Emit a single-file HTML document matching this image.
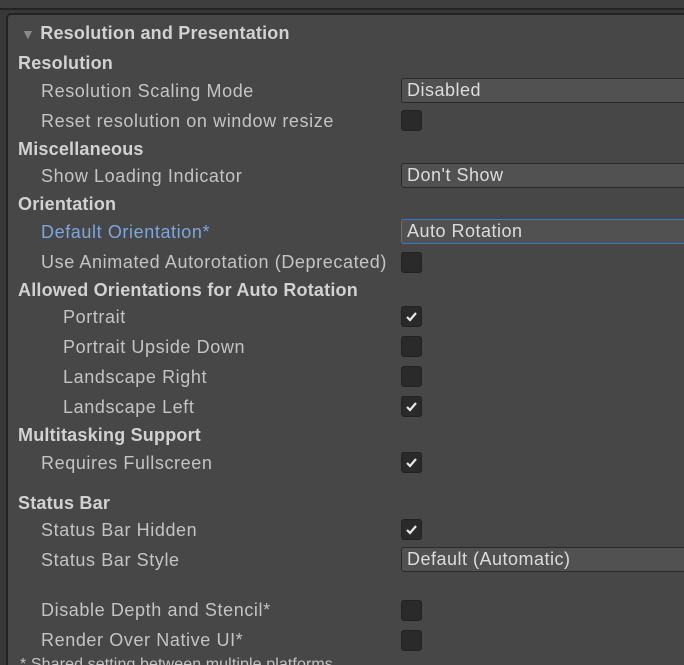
<!DOCTYPE html>
<html><head><style>
html,body{margin:0;width:684px;height:665px;overflow:hidden;}
body{background:#383838;font-family:"Liberation Sans",sans-serif;}
#w{position:relative;width:684px;height:665px;overflow:hidden;}
.top{position:absolute;left:-10px;top:-10px;width:720px;height:16px;border:2px solid #232323;border-radius:5px;background:#3e3e3e;}
.panel{position:absolute;left:6px;top:13px;width:700px;height:660px;border:2px solid #232323;border-radius:5px;background:#474747;}
.t{position:absolute;color:#c4c4c4;font-size:18px;letter-spacing:0.6px;white-space:nowrap;line-height:20px;}
.b{font-weight:bold;color:#d2d2d2;letter-spacing:0.2px;}
.dd{position:absolute;left:401px;width:300px;height:25px;background:#515151;border:1px solid #2a2a2a;border-radius:3px;color:#dcdcdc;font-size:18px;letter-spacing:0.5px;line-height:23px;padding-left:5px;box-sizing:border-box;}
.cb{position:absolute;left:401px;width:21px;height:21px;background:#2a2a2a;border:1px solid #222;border-radius:3px;box-sizing:border-box;}
.cb svg{position:absolute;left:2px;top:2px;}
</style></head><body><div id="w">
<div class="top"></div>
<div class="panel"></div>
<div class="t b" style="left:21px;top:23px;"><span style="color:#8a8a8a;font-size:14px;">▼</span>&nbsp;Resolution and Presentation</div>
<div class="t b" style="left:18px;top:53px;">Resolution</div>
<div class="t" style="left:41px;top:81px;">Resolution Scaling Mode</div>
<div class="dd" style="top:78px;">Disabled</div>
<div class="t" style="left:41px;top:111px;">Reset resolution on window resize</div>
<div class="cb" style="top:110px;"></div>
<div class="t b" style="left:18px;top:139px;">Miscellaneous</div>
<div class="t" style="left:41px;top:166px;">Show Loading Indicator</div>
<div class="dd" style="top:163px;">Don't Show</div>
<div class="t b" style="left:18px;top:194px;">Orientation</div>
<div class="t" style="left:41px;top:222px;color:#7ba7e0;">Default Orientation*</div>
<div class="dd" style="top:219px;border:1px solid #3a79bb;">Auto Rotation</div>
<div class="t" style="left:41px;top:252px;">Use Animated Autorotation (Deprecated)</div>
<div class="cb" style="top:252px;"></div>
<div class="t b" style="left:18px;top:280px;">Allowed Orientations for Auto Rotation</div>
<div class="t" style="left:63px;top:307px;">Portrait</div>
<div class="cb" style="top:306px;"><svg width="15" height="15"><path d="M3 8 L6 11 L12 4" stroke="#e8e8e8" stroke-width="2.2" fill="none"/></svg></div>
<div class="t" style="left:63px;top:337px;">Portrait Upside Down</div>
<div class="cb" style="top:336px;"></div>
<div class="t" style="left:63px;top:367px;">Landscape Right</div>
<div class="cb" style="top:366px;"></div>
<div class="t" style="left:63px;top:397px;">Landscape Left</div>
<div class="cb" style="top:396px;"><svg width="15" height="15"><path d="M3 8 L6 11 L12 4" stroke="#e8e8e8" stroke-width="2.2" fill="none"/></svg></div>
<div class="t b" style="left:18px;top:425px;">Multitasking Support</div>
<div class="t" style="left:41px;top:453px;">Requires Fullscreen</div>
<div class="cb" style="top:452px;"><svg width="15" height="15"><path d="M3 8 L6 11 L12 4" stroke="#e8e8e8" stroke-width="2.2" fill="none"/></svg></div>
<div class="t b" style="left:18px;top:493px;">Status Bar</div>
<div class="t" style="left:41px;top:520px;">Status Bar Hidden</div>
<div class="cb" style="top:519px;"><svg width="15" height="15"><path d="M3 8 L6 11 L12 4" stroke="#e8e8e8" stroke-width="2.2" fill="none"/></svg></div>
<div class="t" style="left:41px;top:550px;">Status Bar Style</div>
<div class="dd" style="top:547px;">Default (Automatic)</div>
<div class="t" style="left:41px;top:600px;">Disable Depth and Stencil*</div>
<div class="cb" style="top:600px;"></div>
<div class="t" style="left:41px;top:630px;">Render Over Native UI*</div>
<div class="cb" style="top:630px;"></div>
<div class="t" style="left:20px;top:656px;height:9px;overflow:hidden;font-size:16px;letter-spacing:0.1px;line-height:18px;">* Shared setting between multiple platforms.</div>
</div></body></html>
